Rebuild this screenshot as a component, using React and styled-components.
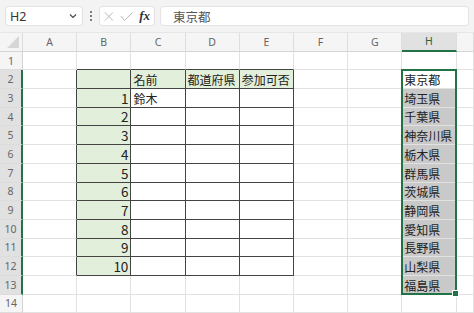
import React from 'react';
import styled, { createGlobalStyle } from 'styled-components';

const GlobalStyle = createGlobalStyle`
  html, body { margin: 0; padding: 0; background: #fff; overflow: hidden; }
  body { font-family: "Noto Sans CJK JP", "Noto Sans", sans-serif; }
`;

const GREEN = '#217346';
const COLS = ['A', 'B', 'C', 'D', 'E', 'F', 'G', 'H', 'I'];
const ROWS = 14;

const Toolbar = styled.div`
  height: 33px;
  background: #f3f3f3;
  display: flex;
  align-items: center;
  padding: 0 5px;
  gap: 5px;
  box-sizing: border-box;
  border-bottom: 1px solid #e6e6e6;
`;

const Box = styled.div`
  height: 20px;
  background: #fff;
  border: 1px solid #e3e3e3;
  border-radius: 4px;
  display: flex;
  align-items: center;
  box-sizing: border-box;
  flex: ${(p) => (p.$grow ? 1 : 'none')};
  width: ${(p) => (p.$w ? `${p.$w}px` : 'auto')};
  padding: 0 ${(p) => p.$pad || 4}px;
  gap: ${(p) => p.$gap || 0}px;
  color: #444;
  font-size: 12.5px;
`;

const NameText = styled.span`
  flex: 1;
  font-family: "Noto Sans", sans-serif;
  font-size: 12.5px;
  color: #333;
`;

const Dots = styled.div`
  width: 6px;
  display: flex;
  flex-direction: column;
  align-items: center;
  gap: 2px;
  span { width: 2px; height: 2px; border-radius: 1px; background: #555; }
`;

const Fx = styled.span`
  font-family: "Liberation Serif", serif;
  font-style: italic;
  font-weight: bold;
  font-size: 13px;
  color: #333;
  margin-left: auto;
`;

const FormulaText = styled.span`
  color: #555;
  font-size: 12.5px;
  padding-left: 8px;
`;

const Sheet = styled.div`
  position: relative;
  display: grid;
  grid-template-columns: 23px repeat(8, 54.2px) 1fr;
  grid-template-rows: repeat(15, 18.7px);
`;

const Corner = styled.div`
  background: #f5f5f5;
  border-right: 1px solid #dcdcdc;
  border-bottom: 1px solid #d4d4d4;
  position: relative;
  &::after {
    content: '';
    position: absolute;
    right: 3px;
    bottom: 3px;
    border-style: solid;
    border-width: 0 0 12px 12px;
    border-color: transparent transparent #d6d6d6 transparent;
  }
`;

const ColHead = styled.div`
  background: ${(p) => (p.$sel ? '#e1e1e1' : '#f5f5f5')};
  border-right: 1px solid #dedede;
  border-bottom: ${(p) => (p.$sel ? `2px solid ${GREEN}` : '1px solid #d4d4d4')};
  display: flex;
  align-items: center;
  justify-content: center;
  font-family: "Noto Sans", sans-serif;
  font-size: 10.5px;
  color: ${(p) => (p.$sel ? '#2b5f3f' : '#666')};
  box-sizing: border-box;
`;

const RowHead = styled.div`
  background: ${(p) => (p.$sel ? '#e1e1e1' : '#f5f5f5')};
  border-bottom: 1px solid #dcdcdc;
  border-right: ${(p) => (p.$sel ? `2px solid ${GREEN}` : '1px solid #d4d4d4')};
  display: flex;
  align-items: center;
  justify-content: center;
  font-family: "Noto Sans", sans-serif;
  font-size: 10.5px;
  color: #666;
  box-sizing: border-box;
`;

const Cell = styled.div`
  background: ${(p) => p.$fill || '#fff'};
  border-right: 1px solid ${(p) => (p.$darkR ? '#444' : '#e2e2e2')};
  border-bottom: 1px solid ${(p) => (p.$darkB ? '#444' : '#e2e2e2')};
  display: flex;
  align-items: flex-end;
  justify-content: ${(p) => (p.$right ? 'flex-end' : 'flex-start')};
  padding: 0 2px 0 2px;
  box-sizing: border-box;
  font-size: ${(p) => (p.$num ? '13.5px' : '12px')};
  line-height: 17px;
  color: #222;
  white-space: nowrap;
  overflow: visible;
`;

const Selection = styled.div`
  position: absolute;
  grid-column: 9 / 10;
  grid-row: 3 / 15;
  top: -1px;
  left: -1px;
  right: 0;
  bottom: 0;
  border: 2px solid ${GREEN};
  pointer-events: none;
`;

const Handle = styled.div`
  position: absolute;
  right: -4px;
  bottom: -4px;
  width: 5px;
  height: 5px;
  background: ${GREEN};
  border: 1px solid #fff;
`;

const prefs = ['東京都', '埼玉県', '千葉県', '神奈川県', '栃木県', '群馬県', '茨城県', '静岡県', '愛知県', '長野県', '山梨県', '福島県'];

const inTable = (c, r) => c >= 1 && c <= 4 && r >= 2 && r <= 12;

const cellData = (c, r) => {
  const d = { text: '', fill: null, right: false, num: false };
  if (inTable(c, r)) {
    if (c === 1 || r === 2) d.fill = '#e2efda';
    if (c === 1 && r >= 3) { d.text = String(r - 2); d.right = true; d.num = true; }
    if (r === 2 && c === 2) d.text = '名前';
    if (r === 2 && c === 3) d.text = '都道府県';
    if (r === 2 && c === 4) d.text = '参加可否';
    if (r === 3 && c === 2) d.text = '鈴木';
  }
  if (c === 7 && r >= 2 && r <= 13) {
    d.text = prefs[r - 2];
    if (r > 2) d.fill = '#c9c9c9';
  }
  return d;
};

const ChevronDown = () => (
  <svg width="10" height="10" viewBox="0 0 10 10">
    <path d="M2 3.5 L5 6.5 L8 3.5" fill="none" stroke="#444" strokeWidth="1.1" />
  </svg>
);

const Cross = () => (
  <svg width="11" height="11" viewBox="0 0 11 11">
    <path d="M1 1 L10 10 M10 1 L1 10" stroke="#b0b0b0" strokeWidth="1" />
  </svg>
);

const Check = () => (
  <svg width="15" height="11" viewBox="0 0 15 11">
    <path d="M1 5 L5 10 L14 1" fill="none" stroke="#b0b0b0" strokeWidth="1" />
  </svg>
);

const App = () => {
  const cells = [];
  for (let r = 1; r <= ROWS; r++) {
    const sel = r >= 2 && r <= 13;
    cells.push(<RowHead key={`rh${r}`} $sel={sel}>{r}</RowHead>);
    for (let c = 0; c < COLS.length; c++) {
      const d = cellData(c, r);
      cells.push(
        <Cell
          key={`${c}-${r}`}
          $fill={d.fill}
          $right={d.right}
          $num={d.num}
          $darkR={inTable(c, r) || inTable(c + 1, r)}
          $darkB={inTable(c, r) || inTable(c, r + 1)}
        >
          {d.text}
        </Cell>
      );
    }
  }

  return (
    <>
      <GlobalStyle />
      <Toolbar>
        <Box $w={78} $pad={4}>
          <NameText>H2</NameText>
          <ChevronDown />
        </Box>
        <Dots><span /><span /><span /></Dots>
        <Box $w={56} $pad={4} $gap={6}>
          <Cross />
          <Check />
          <Fx>fx</Fx>
        </Box>
        <Box $grow>
          <FormulaText>東京都</FormulaText>
        </Box>
      </Toolbar>
      <Sheet>
        <Corner />
        {COLS.map((l) => (
          <ColHead key={l} $sel={l === 'H'}>{l === 'I' ? '' : l}</ColHead>
        ))}
        {cells}
        <Selection>
          <Handle />
        </Selection>
      </Sheet>
    </>
  );
};

export default App;
